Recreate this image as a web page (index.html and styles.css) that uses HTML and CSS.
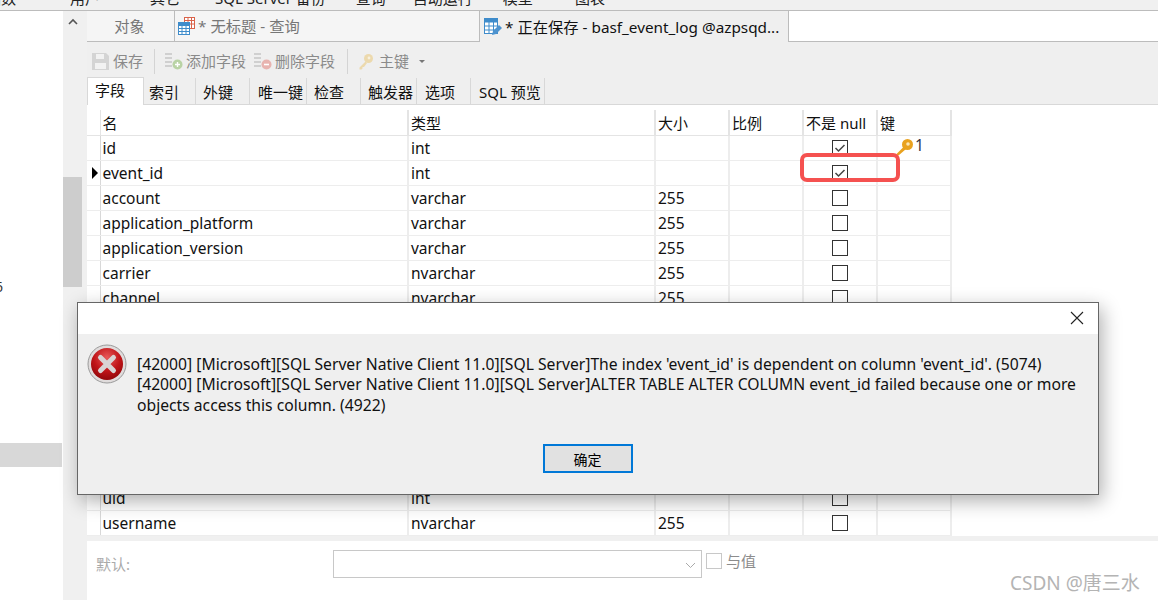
FILE: index.html
```html
<!DOCTYPE html>
<html lang="zh">
<head>
<meta charset="utf-8">
<title>basf_event_log</title>
<link rel="stylesheet" href="styles.css">
</head>
<body>
<div class="menubar">
  <span class="m m1">函数</span><span class="m m2">用户</span><span class="m m3">其它</span><span class="m m4">SQL Server 备份</span><span class="m m5">查询</span><span class="m m6">自动运行</span><span class="m m7">模型</span><span class="m m8">图表</span>
</div>
<div class="app">
  <aside class="sidebar">
    <div class="tree">
      <div class="tree-num">6</div>
      <div class="tree-sel"></div>
    </div>
    <div class="scrollbar">
      <svg class="scroll-up" width="10" height="8" viewBox="0 0 10 8"><path d="M1 6l4-4 4 4" fill="none" stroke="#555" stroke-width="1.6"/></svg>
      <div class="thumb"></div>
    </div>
  </aside>
  <main class="main">
    <div class="tabs">
      <div class="tab tab-obj">对象</div>
      <div class="tab tab-query">
        <svg width="18" height="18" viewBox="0 0 18 18"><rect x="6.5" y="0.5" width="10" height="11" fill="#fff" stroke="#d9634a"/><path d="M6.5 3.5h10M10 0.5v11M13.5 0.5v11M6.5 7h10" stroke="#d9634a"/><rect x="0.5" y="5.5" width="11" height="12" fill="#fff" stroke="#3f8ccb"/><path d="M0.5 8.5h11M0.5 11.5h11M0.5 14.5h11M4 5.5v12M8 5.5v12" stroke="#3f8ccb"/><rect x="0.5" y="5.5" width="11" height="3" fill="#3f8ccb"/></svg>
        <span>* 无标题 - 查询</span>
      </div>
      <div class="tab tab-active">
        <svg width="18" height="18" viewBox="0 0 18 18"><rect x="0.5" y="0.5" width="13" height="15" fill="#fff" stroke="#3f8ccb"/><rect x="0.5" y="0.5" width="13" height="4" fill="#3f8ccb"/><path d="M0.5 8h13M0.5 12h13M5 4v12M9.5 4v12" stroke="#3f8ccb"/><path d="M8 17l1-4 6-6 3 3-6 6z" fill="#4d93cf"/></svg>
        <span>* 正在保存 - basf_event_log @azpsqd...</span>
      </div>
      <div class="tab-rest"></div>
    </div>
    <div class="toolbar">
      <div class="tool t-save">
        <svg width="17" height="17" viewBox="0 0 17 17"><path d="M0 0h14l3 3v14H0z" fill="#d4d4d4"/><rect x="4" y="1" width="8" height="5" fill="#f2f2f2"/><rect x="3" y="10" width="11" height="6" fill="#f2f2f2"/></svg>
        <span>保存</span>
      </div>
      <div class="sep"></div>
      <div class="tool t-add">
        <svg width="18" height="18" viewBox="0 0 18 18"><path d="M0 2h7M0 6h7M0 10h7M0 14h7" stroke="#d0d0d0" stroke-width="2"/><circle cx="12.5" cy="12.5" r="5" fill="#b9d3a5"/><path d="M10 12.5h5M12.5 10v5" stroke="#fff" stroke-width="1.4"/></svg>
        <span>添加字段</span>
      </div>
      <div class="tool t-del">
        <svg width="18" height="18" viewBox="0 0 18 18"><path d="M0 2h7M0 6h7M0 10h7M0 14h7" stroke="#d0d0d0" stroke-width="2"/><circle cx="12.5" cy="12.5" r="5" fill="#e8b4b0"/><path d="M10 12.5h5" stroke="#fff" stroke-width="1.6"/></svg>
        <span>删除字段</span>
      </div>
      <div class="sep sep2"></div>
      <div class="tool t-key">
        <svg width="16" height="17" viewBox="0 0 16 17"><circle cx="10.5" cy="5.5" r="4.5" fill="#ecd9ad"/><circle cx="11" cy="5" r="1.4" fill="#f7f0de"/><path d="M7.5 8.5L1.5 14.5v2h2l1-1v-1.5h1.5l3-4z" fill="#ecd9ad"/></svg>
        <span>主键</span>
        <i class="caret"></i>
      </div>
    </div>
    <div class="subtabs">
      <div class="st st-on w1">字段</div>
      <div class="st w2">索引</div>
      <div class="st w3">外键</div>
      <div class="st w4">唯一键</div>
      <div class="st w5">检查</div>
      <div class="st w6">触发器</div>
      <div class="st w7">选项</div>
      <div class="st w8">SQL 预览</div>
    </div>
    <div class="grid-area">
      <table class="grid">
        <colgroup><col class="c0"><col class="c1"><col class="c2"><col class="c3"><col class="c3"><col class="c3"><col class="c3"></colgroup>
        <thead><tr><th class="gut"></th><th>名</th><th>类型</th><th>大小</th><th>比例</th><th>不是 null</th><th>键</th></tr></thead>
        <tbody>
          <tr><td class="gut"></td><td>id</td><td>int</td><td></td><td></td><td class="cc"><span class="cb"><svg width="14" height="14" viewBox="0 0 14 14"><path d="M2.5 7l3 3 6-6" fill="none" stroke="#444" stroke-width="1.5"/></svg></span></td><td class="keycell"><svg class="key" width="17" height="17" viewBox="0 0 17 17"><circle cx="11.5" cy="5.5" r="5.5" fill="#e9a21f"/><circle cx="12" cy="5" r="1.8" fill="#fbe7b6"/><path d="M7.5 8L0.5 15v1.5H2.5L10 10z" fill="#e9a21f"/></svg><span class="keynum">1</span></td></tr>
          <tr><td class="gut cur"><i class="arrow"></i></td><td>event_id</td><td>int</td><td></td><td></td><td class="cc"><span class="cb"><svg width="14" height="14" viewBox="0 0 14 14"><path d="M2.5 7l3 3 6-6" fill="none" stroke="#444" stroke-width="1.5"/></svg></span></td><td></td></tr>
          <tr><td class="gut"></td><td>account</td><td>varchar</td><td>255</td><td></td><td class="cc"><span class="cb"></span></td><td></td></tr>
          <tr><td class="gut"></td><td>application_platform</td><td>varchar</td><td>255</td><td></td><td class="cc"><span class="cb"></span></td><td></td></tr>
          <tr><td class="gut"></td><td>application_version</td><td>varchar</td><td>255</td><td></td><td class="cc"><span class="cb"></span></td><td></td></tr>
          <tr><td class="gut"></td><td>carrier</td><td>nvarchar</td><td>255</td><td></td><td class="cc"><span class="cb"></span></td><td></td></tr>
          <tr><td class="gut"></td><td>channel</td><td>nvarchar</td><td>255</td><td></td><td class="cc"><span class="cb"></span></td><td></td></tr>
          <tr><td class="gut"></td><td></td><td></td><td></td><td></td><td></td><td></td></tr>
          <tr><td class="gut"></td><td></td><td></td><td></td><td></td><td></td><td></td></tr>
          <tr><td class="gut"></td><td></td><td></td><td></td><td></td><td></td><td></td></tr>
          <tr><td class="gut"></td><td></td><td></td><td></td><td></td><td></td><td></td></tr>
          <tr><td class="gut"></td><td></td><td></td><td></td><td></td><td></td><td></td></tr>
          <tr><td class="gut"></td><td></td><td></td><td></td><td></td><td></td><td></td></tr>
          <tr><td class="gut"></td><td></td><td></td><td></td><td></td><td></td><td></td></tr>
          <tr><td class="gut"></td><td>uid</td><td>int</td><td></td><td></td><td class="cc"><span class="cb"></span></td><td></td></tr>
          <tr><td class="gut"></td><td>username</td><td>nvarchar</td><td>255</td><td></td><td class="cc"><span class="cb"></span></td><td></td></tr>
        </tbody>
      </table>
    </div>
    <div class="props">
      <span class="prop-label">默认:</span>
      <div class="select"><svg width="11" height="7" viewBox="0 0 11 7"><path d="M1 1l4.5 4.5L10 1" fill="none" stroke="#aaa"/></svg></div>
      <span class="prop-check"></span>
      <span class="prop-val">与值</span>
      <span class="watermark">CSDN @唐三水</span>
    </div>
  </main>
</div>
<div class="highlight"></div>
<div class="dialog">
  <div class="dlg-title">
    <svg width="14" height="14" viewBox="0 0 14 14"><path d="M1 1l12 12M13 1L1 13" stroke="#222" stroke-width="1.1" fill="none"/></svg>
  </div>
  <div class="dlg-body">
    <svg class="err" width="40" height="40" viewBox="0 0 40 40">
      <defs>
        <radialGradient id="rg" cx="0.5" cy="0.3" r="0.75"><stop offset="0" stop-color="#e85a5a"/><stop offset="0.55" stop-color="#c01418"/><stop offset="1" stop-color="#8b0508"/></radialGradient>
      </defs>
      <circle cx="20" cy="20" r="19" fill="#e0dcdc" stroke="#9a9a9a"/>
      <circle cx="20" cy="20" r="16" fill="url(#rg)"/>
      <path d="M13.5 13.5l13 13M26.5 13.5l-13 13" stroke="#d8d4d4" stroke-width="5" stroke-linecap="round"/>
    </svg>
    <div class="msg">[42000] [Microsoft][SQL Server Native Client 11.0][SQL Server]The index 'event_id' is dependent on column 'event_id'. (5074)<br>[42000] [Microsoft][SQL Server Native Client 11.0][SQL Server]ALTER TABLE ALTER COLUMN event_id failed because one or more objects access this column. (4922)</div>
  </div>
  <div class="dlg-foot"><button class="ok">确定</button></div>
</div>
</body>
</html>
```
FILE: styles.css
```css
* { box-sizing: border-box; }
html, body { margin: 0; height: 600px; overflow: hidden; }
body { position: relative; width: 1158px; background: #fff; color: #000; font: 15px/20px "Noto Sans", "Noto Sans CJK SC", sans-serif; }

.menubar { position: relative; height: 11px; background: #f0f0f0; border-bottom: 1px solid #bcbcbc; overflow: hidden; display: flex; font-size: 15px; line-height: 20px; color: #222; }
.m { flex: none; margin-top: -12px; }
.m1 { margin-left: -14px; }
.m2 { margin-left: 54px; }
.m3 { margin-left: 50px; }
.m4 { margin-left: 35px; }
.m5 { margin-left: 30px; }
.m6 { margin-left: 27px; }
.m7 { margin-left: 30px; }
.m8 { margin-left: 42px; }

.app { display: flex; height: 589px; }
.sidebar { flex: none; width: 87px; display: flex; background: #f0f0f0; }
.tree { width: 63px; background: #fff; overflow: hidden; }
.tree-num { margin-top: 266px; margin-left: -5px; height: 20px; font-size: 14px; color: #333; }
.tree-sel { margin-top: 146px; width: 62px; height: 24px; background: #d8d8d8; }
.scrollbar { width: 19px; display: flex; flex-direction: column; align-items: center; }
.scroll-up { margin-top: 7px; flex: none; }
.thumb { margin-top: 151px; width: 19px; height: 110px; background: #cdcdcd; }

.main { flex: 1; min-width: 0; display: flex; flex-direction: column; background: #efefef; }
.tabs { display: flex; height: 31px; flex: none; }
.tab { display: flex; align-items: center; height: 31px; font-size: 15.3px; border-bottom: 1px solid #bcbcbc; background: #f5f5f5; color: #777; flex: none; }
.tab-obj { width: 87px; justify-content: center; padding-right: 2px; }
.tab-query { width: 306px; padding-left: 3px; gap: 2px; border-left: 1px solid #bcbcbc; border-right: 1px solid #bcbcbc; }
.tab-active { width: 308px; padding-left: 4px; gap: 3px; background: #efefef; border-bottom: 0; color: #111; }
.tab-rest { flex: 1; height: 31px; background: #fff; border-left: 1px solid #bcbcbc; border-bottom: 1px solid #bcbcbc; }

.toolbar { flex: none; height: 36px; padding-top: 2px; display: flex; align-items: center; color: #8a8a8a; font-size: 15px; }
.tool { display: flex; align-items: center; flex: none; }
.t-save { margin-left: 5px; gap: 4px; }
.sep { width: 1px; height: 25px; background: #d4d4d4; margin-left: 11px; flex: none; }
.t-add { margin-left: 10px; gap: 3px; }
.t-del { margin-left: 8px; gap: 3px; }
.sep2 { margin-left: 12px; }
.t-key { margin-left: 10px; gap: 5px; }
.caret { width: 0; height: 0; margin-left: 5px; border: 3px solid transparent; border-top: 3px solid #777; border-bottom: 0; }

.subtabs { flex: none; height: 27px; display: flex; align-items: flex-end; border-bottom: 1px solid #d8d8d8; }
.st { height: 26px; line-height: 28px; background: #efefef; border-right: 1px solid #d8d8d8; font-size: 15px; flex: none; color: #111; padding-left: 7px; white-space: nowrap; }
.st-on { height: 28px; margin-bottom: -1px; line-height: 24px; background: #fff; border: 1px solid #d8d8d8; border-bottom: 0; position: relative; padding-left: 7px; }
.w1 { width: 57px; }
.w2 { width: 52px; padding-left: 5px; }
.w3 { width: 54px; }
.w4 { width: 57px; padding-left: 8px; }
.w5 { width: 54px; }
.w6 { width: 56px; }
.w7 { width: 54px; padding-left: 8px; }
.w8 { width: 74px; padding-left: 8px; }

.grid-area { flex: none; height: 431px; background: #fff; padding-top: 5px; }
.grid { border-collapse: collapse; table-layout: fixed; width: 865px; }
.c0 { width: 13px; }
.c1 { width: 308px; }
.c2 { width: 247px; }
.c3 { width: 74px; }
.grid th, .grid td { padding: 0 0 0 2px; height: 25px; border: 1px solid #ededed; border-width: 0 2px 1px 0; font-weight: 400; font-size: 15.5px; text-align: left; white-space: nowrap; overflow: visible; color: #111; line-height: 24px; }
.grid th { border-color: #e4e4e4; font-size: 15px; padding-top: 2px; line-height: 22px; }
.grid .gut { padding: 0; border-right: 1px solid #d8d8d8; }
.grid thead .gut { border-right: 1px solid #e4e4e4; }
.grid tbody td:nth-child(2) { padding-left: 2px; }
.grid thead th:nth-child(2) { padding-left: 2px; }
.cur { position: relative; }
.arrow { position: absolute; left: 5px; top: 6px; width: 0; height: 0; border: 6px solid transparent; border-left: 6px solid #000; border-right: 0; }
.cc { text-align: center !important; padding: 0 !important; }
.cb { display: inline-block; vertical-align: -2px; width: 16px; height: 16px; border: 1px solid #333; background: #fff; }
.cb svg { display: block; }
.keycell { position: relative; }
.key { position: absolute; left: 18px; top: 3px; }
.keynum { position: absolute; left: 37px; top: -3px; color: #334; }

.props { flex: 1; position: relative; display: flex; align-items: flex-start; background: #fff; border-top: 5px solid #f0f0f0; font-size: 15px; color: #aaa; }
.prop-label { margin: 13px 0 0 9px; width: 237px; flex: none; }
.select { flex: none; width: 369px; height: 28px; margin-top: 9px; border: 1px solid #c8c8c8; display: flex; align-items: center; justify-content: flex-end; padding: 2px 5px 0 0; }
.prop-check { flex: none; width: 16px; height: 16px; margin: 12px 0 0 4px; border: 1px solid #c8c8c8; }
.prop-val { margin: 10px 0 0 4px; color: #8c8c8c; flex: none; }
.watermark { margin: 32px 0 0 254px; flex: none; font-size: 19px; color: #b4b4b4; white-space: nowrap; }

.highlight { position: absolute; left: 800px; top: 153px; width: 100px; height: 29px; border: 4px solid #f55150; border-radius: 7px; }

.dialog { position: absolute; left: 77px; top: 302px; width: 1022px; height: 193px; background: #efefef; border: 1px solid #666; box-shadow: 3px 6px 18px rgba(0,0,0,.32); display: flex; flex-direction: column; }
.dlg-title { height: 31px; flex: none; background: #fff; display: flex; justify-content: flex-end; align-items: center; padding: 0 14px 1px 0; }
.dlg-body { flex: none; height: 110px; display: flex; align-items: flex-start; padding-left: 9px; }
.err { flex: none; margin-top: 10px; }
.msg { margin: 20px 0 0 10px; width: 950px; font-size: 15.7px; color: #111; line-height: 20.4px; }
.dlg-foot { display: flex; justify-content: center; }
.ok { width: 90px; height: 29px; margin-right: 1px; background: #e1e1e1; border: 2px solid #0078d7; padding: 0; font: 14px/20px "Noto Sans CJK SC", sans-serif; color: #000; }
```
